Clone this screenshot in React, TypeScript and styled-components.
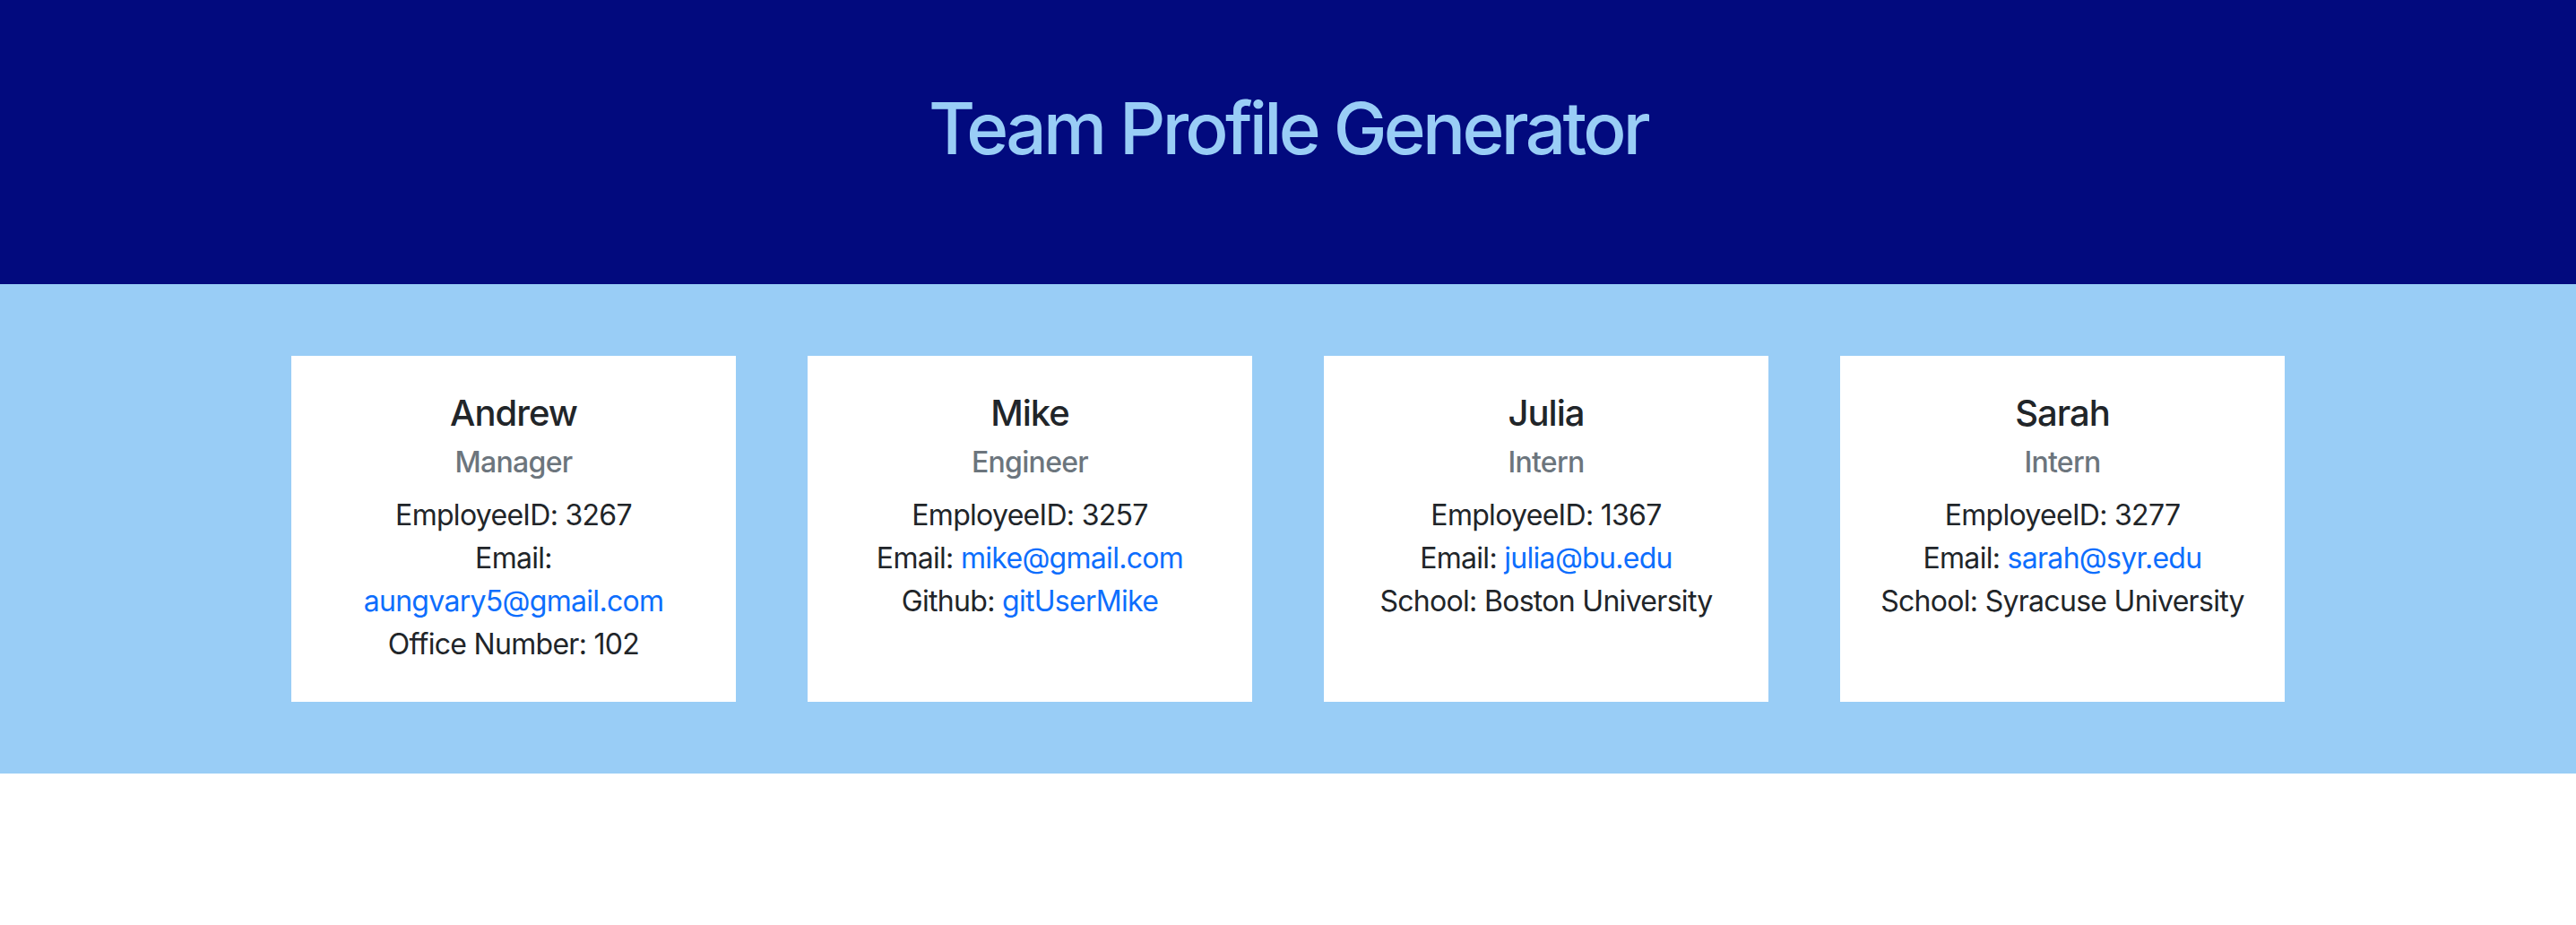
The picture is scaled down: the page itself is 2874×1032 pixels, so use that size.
import React from 'react';
import styled, { createGlobalStyle } from 'styled-components';

const GlobalStyle = createGlobalStyle`
  html, body {
    margin: 0;
    padding: 0;
    background: #ffffff;
  }
  body {
    font-family: Inter, "Noto Sans", "Liberation Sans", sans-serif;
    color: #212529;
    font-size: 32px;
    line-height: 1.5;
    letter-spacing: -0.7px;
  }
  * {
    box-sizing: border-box;
  }
`;

const Header = styled.header`
  background-color: #020a7e;
  padding: 95px 0 126px;
  text-align: center;
`;

const Title = styled.h1`
  margin: 0;
  font-size: 80px;
  font-weight: 500;
  line-height: 1.2;
  letter-spacing: -3.7px;
  color: #99cdf6;
`;

const Team = styled.main`
  background-color: #99cdf6;
  padding: 80px 0;
  display: flex;
  justify-content: center;
  gap: 80px;
`;

const Card = styled.div`
  width: 496px;
  background: #ffffff;
  padding: 40px;
  text-align: center;
`;

const Name = styled.h5`
  margin: 0 0 12px;
  font-size: 40px;
  font-weight: 500;
  line-height: 1.2;
  letter-spacing: -1px;
  color: #212529;
`;

const Role = styled.h6`
  margin: 0 0 16px;
  font-size: 32px;
  font-weight: 500;
  line-height: 1.2;
  color: #6c757d;
`;

const Line = styled.p`
  margin: 0;
  white-space: nowrap;
`;

const Link = styled.a`
  color: #0d6efd;
  text-decoration: none;
`;

type Member = {
  name: string;
  role: string;
  id: number;
  email: string;
  wrapEmail?: boolean;
  extraLabel: string;
  extraValue: string;
  extraLink?: boolean;
};

const team: Member[] = [
  {
    name: 'Andrew',
    role: 'Manager',
    id: 3267,
    email: 'aungvary5@gmail.com',
    wrapEmail: true,
    extraLabel: 'Office Number',
    extraValue: '102',
  },
  {
    name: 'Mike',
    role: 'Engineer',
    id: 3257,
    email: 'mike@gmail.com',
    extraLabel: 'Github',
    extraValue: 'gitUserMike',
    extraLink: true,
  },
  {
    name: 'Julia',
    role: 'Intern',
    id: 1367,
    email: 'julia@bu.edu',
    extraLabel: 'School',
    extraValue: 'Boston University',
  },
  {
    name: 'Sarah',
    role: 'Intern',
    id: 3277,
    email: 'sarah@syr.edu',
    extraLabel: 'School',
    extraValue: 'Syracuse University',
  },
];

export default function App() {
  return (
    <>
      <GlobalStyle />
      <Header>
        <Title>Team Profile Generator</Title>
      </Header>
      <Team>
        {team.map((m) => (
          <Card key={m.id}>
            <Name>{m.name}</Name>
            <Role>{m.role}</Role>
            <Line>EmployeeID: {m.id}</Line>
            {m.wrapEmail ? (
              <>
                <Line>Email:</Line>
                <Line>
                  <Link href={`mailto:${m.email}`}>{m.email}</Link>
                </Line>
              </>
            ) : (
              <Line>
                Email: <Link href={`mailto:${m.email}`}>{m.email}</Link>
              </Line>
            )}
            <Line>
              {m.extraLabel}:{' '}
              {m.extraLink ? <Link href="#">{m.extraValue}</Link> : m.extraValue}
            </Line>
          </Card>
        ))}
      </Team>
    </>
  );
}
